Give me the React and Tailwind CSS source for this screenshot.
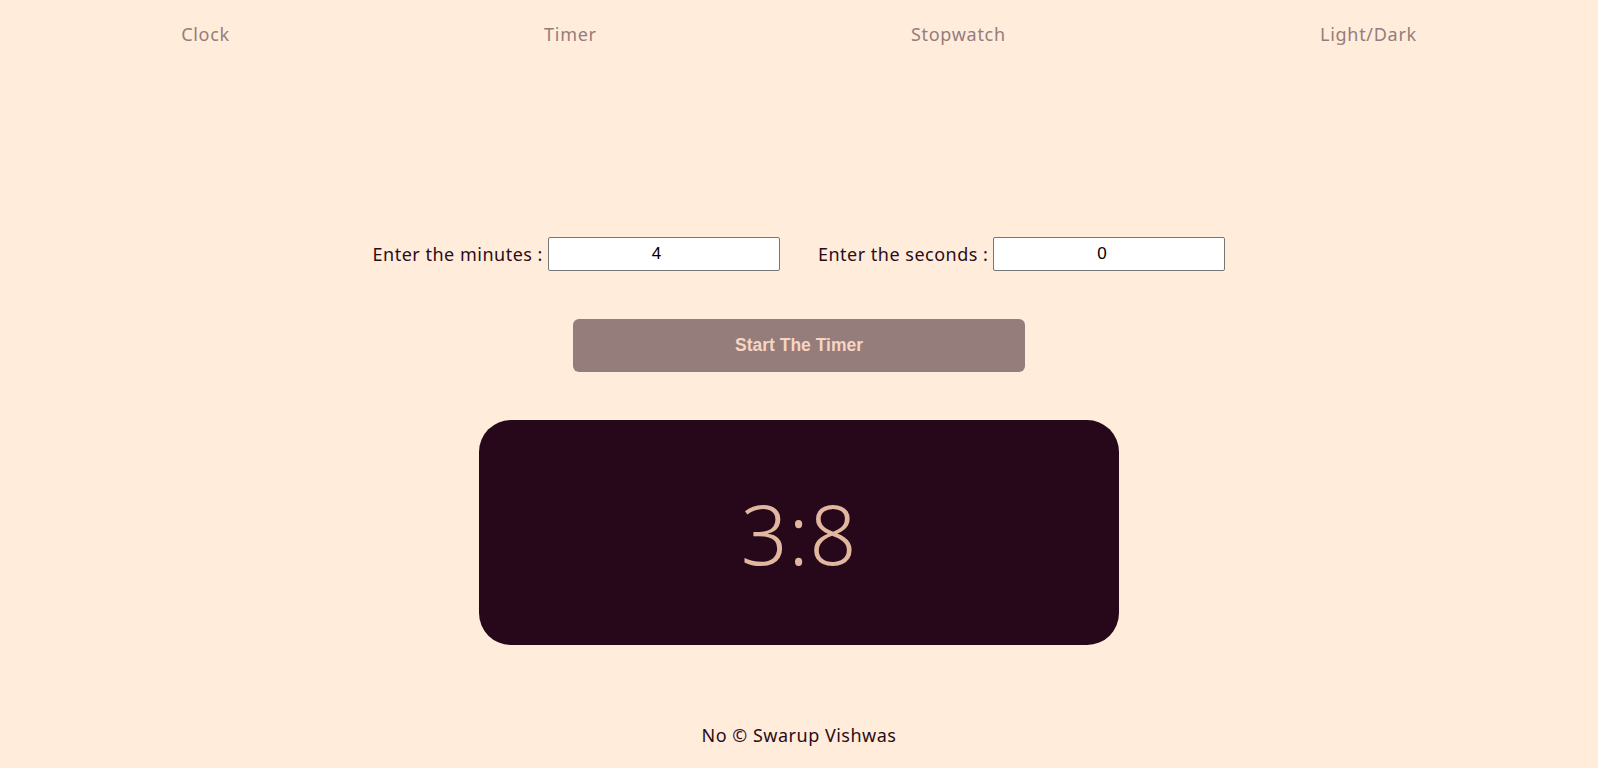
import React, { useState } from 'react';

const NAV = ['Clock', 'Timer', 'Stopwatch', 'Light/Dark'];

const App = () => {
    const [minutes, setMinutes] = useState('4');
    const [seconds, setSeconds] = useState('0');

    return (
        <div className="min-h-screen bg-[#ffecdb] font-['Noto_Sans',sans-serif] flex flex-col">
            <nav className="h-[68px] flex items-center justify-around px-6 text-[18px] tracking-[0.7px] text-[#957d7b]">
                {NAV.map((item) => (
                    <a key={item} href="#" className="cursor-pointer">
                        {item}
                    </a>
                ))}
            </nav>

            <main className="flex flex-col items-center pt-[169px]">
                <div className="flex items-center gap-[38px] text-[18px] tracking-[0.5px] text-[#2b0c18]">
                    <label className="flex items-center gap-[5px]">
                        Enter the minutes :
                        <input
                            type="number"
                            value={minutes}
                            onChange={(e) => setMinutes(e.target.value)}
                            className="w-[232px] h-[34px] bg-white border border-[#767676] rounded-[2px] text-center text-[17px] tracking-normal text-black font-['Liberation_Sans',sans-serif] outline-none"
                        />
                    </label>
                    <label className="flex items-center gap-[5px]">
                        Enter the seconds :
                        <input
                            type="number"
                            value={seconds}
                            onChange={(e) => setSeconds(e.target.value)}
                            className="w-[232px] h-[34px] bg-white border border-[#767676] rounded-[2px] text-center text-[17px] tracking-normal text-black font-['Liberation_Sans',sans-serif] outline-none"
                        />
                    </label>
                </div>

                <button
                    type="button"
                    className="mt-[48px] w-[452px] h-[53px] rounded-[6px] bg-[#947d7a] text-[#f6d5c3] font-bold text-[17.5px] font-['Liberation_Sans',sans-serif]"
                >
                    Start The Timer
                </button>

                <div className="mt-[48px] w-[640px] h-[225px] rounded-[32px] bg-[#27071a] flex items-center justify-center">
                    <span className="text-[#e2b7a0] text-[82px] tracking-[1px] font-light leading-none">3:8</span>
                </div>
            </main>

            <footer className="mt-[77px] text-center text-[18px] tracking-[0.5px] text-[#2b0c18]">
                No © Swarup Vishwas
            </footer>
        </div>
    );
};

export default App;
